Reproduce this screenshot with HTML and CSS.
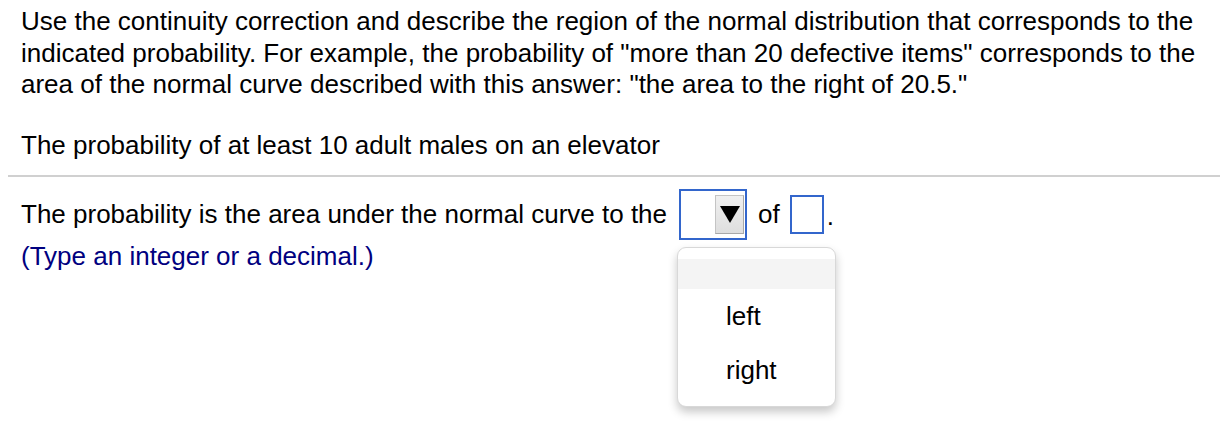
FILE: index.html
```html
<!DOCTYPE html>
<html>
<head>
<meta charset="utf-8">
<link rel="stylesheet" href="styles.css">
</head>
<body>
<div class="page">
  <div class="question">
    <p class="intro">Use the continuity correction and describe the region of the normal distribution that corresponds to the indicated probability. For example, the probability of "more than 20 defective items" corresponds to the area of the normal curve described with this answer: "the area to the right of 20.5."</p>
    <p class="prompt">The probability of at least 10 adult males on an elevator</p>
  </div>
  <hr class="sep">
  <div class="answer">
    <div class="line">
      <span>The probability is the area under the normal curve to the</span>
      <span class="select">
        <span class="select-btn">
          <svg width="20" height="17" viewBox="0 0 20 17"><polygon points="0,0 20,0 10,17" fill="#000"/></svg>
        </span>
      </span>
      <span class="of">of</span>
      <span class="input"></span>
      <span class="dot">.</span>
    </div>
    <div class="hint">(Type an integer or a decimal.)</div>
    <div class="menu">
      <div class="menu-item blank"></div>
      <div class="menu-item">left</div>
      <div class="menu-item">right</div>
    </div>
  </div>
</div>
</body>
</html>
```
FILE: styles.css
```css
html, body {
  margin: 0;
  padding: 0;
  background: #fff;
  min-height: 446px;
}
body {
  font-family: "Liberation Sans", Arial, sans-serif;
  font-size: 26px;
  color: #000;
}
.page {
  padding: 0 0 0 8px;
  min-height: 446px;
}
.question {
  padding: 6px 0 0 13px;
  width: 1190px;
}
.intro {
  margin: 0;
  line-height: 31.5px;
}
.prompt {
  margin: 28px 0 0 0;
  line-height: 32px;
}
.sep {
  border: 0;
  height: 2px;
  background: #d0d0d0;
  margin: 14px 0 0 0;
}
.answer {
  position: relative;
  padding: 12px 0 0 13px;
}
.line {
  display: flex;
  align-items: center;
  height: 52px;
}
.select {
  box-sizing: border-box;
  margin-left: 12px;
  width: 68px;
  height: 51px;
  border: 2px solid #3366cc;
  display: flex;
  justify-content: flex-end;
  align-items: center;
  padding-right: 1px;
}
.select-btn {
  box-sizing: border-box;
  width: 29px;
  height: 39px;
  background: linear-gradient(#f0f0f0, #dedede);
  border: 1px solid #c4c4c4;
  border-right-color: #a9a9a9;
  border-bottom-color: #a9a9a9;
  display: flex;
  align-items: center;
  justify-content: center;
}
.of {
  margin-left: 11px;
}
.input {
  box-sizing: border-box;
  margin-left: 10px;
  width: 34px;
  height: 39px;
  border: 2px solid #3366cc;
}
.dot {
  margin-left: 3px;
  position: relative;
  top: 2px;
}
.hint {
  color: #000080;
  line-height: 30px;
  margin-top: 0;
}
.menu {
  position: absolute;
  left: 669px;
  top: 70px;
  width: 159px;
  height: 160px;
  background: #fff;
  border: 1px solid #d8d8d8;
  border-radius: 9px;
  box-shadow: 0 5px 10px rgba(0,0,0,0.22);
  padding-top: 11px;
  box-sizing: border-box;
  overflow: hidden;
}
.menu-item {
  height: 54px;
  line-height: 54px;
  padding-left: 48px;
}
.menu-item.blank {
  height: 30px;
  background: #f4f4f4;
}
```
